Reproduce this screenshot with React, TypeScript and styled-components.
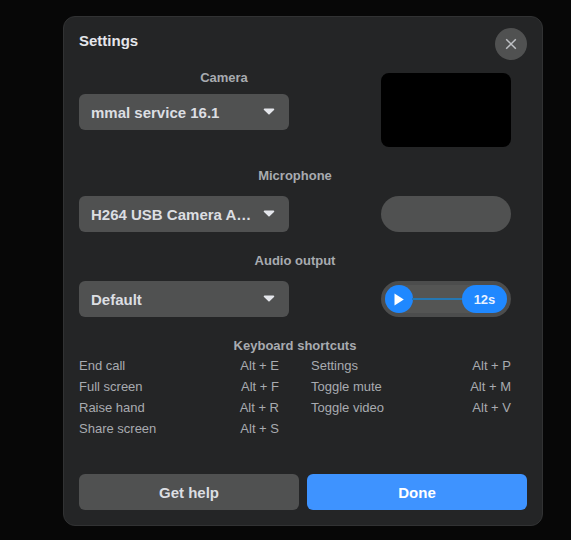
import React from "react";
import styled, { createGlobalStyle } from "styled-components";

const Global = createGlobalStyle`
  html, body { margin: 0; padding: 0; background: #070707; }
  body { width: 571px; height: 540px; overflow: hidden; font-family: "Liberation Sans", Arial, sans-serif; }
`;

const Page = styled.div`
  width: 571px;
  height: 540px;
  padding: 16px 28px 14px 63px;
  box-sizing: border-box;
`;

const Dialog = styled.div`
  position: relative;
  width: 480px;
  height: 510px;
  box-sizing: border-box;
  padding: 15px;
  background: #242526;
  border: 1px solid #313233;
  border-radius: 12px;
  display: flex;
  flex-direction: column;
`;

const Title = styled.h1`
  margin: 0;
  font-size: 15px;
  line-height: 18px;
  font-weight: 700;
  color: #e4e6eb;
`;

const CloseButton = styled.button`
  position: absolute;
  top: 11px;
  right: 15px;
  width: 32px;
  height: 32px;
  padding: 0;
  border: 0;
  border-radius: 50%;
  background: #505151;
  display: flex;
  align-items: center;
  justify-content: center;
`;

const Row = styled.div<{ $top: number }>`
  display: grid;
  grid-template-columns: 290px 130px;
  column-gap: 12px;
  margin-top: ${(p) => p.$top}px;
`;

const Column = styled.div`
  display: flex;
  flex-direction: column;
`;

const FieldLabel = styled.div<{ $gap: number }>`
  font-size: 13px;
  line-height: 15px;
  font-weight: 700;
  color: #a8abb0;
  text-align: center;
  margin-bottom: ${(p) => p.$gap}px;
`;

const WideLabel = styled(FieldLabel)<{ $top: number }>`
  width: 432px;
  margin-top: ${(p) => p.$top}px;
`;

const Select = styled.div`
  width: 210px;
  height: 36px;
  box-sizing: border-box;
  padding: 0 14px 0 12px;
  border-radius: 6px;
  background: #505151;
  display: flex;
  align-items: center;
  gap: 10px;
`;

const SelectText = styled.span`
  flex: 1;
  min-width: 0;
  overflow: hidden;
  white-space: nowrap;
  text-overflow: ellipsis;
  font-size: 15px;
  font-weight: 700;
  color: #dcdee2;
`;

const CaretIcon = styled.svg`
  flex: none;
  width: 12px;
  height: 7px;
  margin-top: -2px;
`;

const Preview = styled.div`
  width: 130px;
  height: 74px;
  margin-top: 3px;
  border-radius: 8px;
  background: #000;
`;

const MicMeter = styled.div`
  width: 130px;
  height: 36px;
  border-radius: 18px;
  background: #505151;
`;

const Player = styled.div`
  width: 130px;
  height: 36px;
  box-sizing: border-box;
  border: 4px solid #4c4d4d;
  border-radius: 18px;
  background: #545554;
  display: flex;
  align-items: center;
`;

const PlayCircle = styled.div`
  flex: none;
  width: 28px;
  height: 28px;
  border-radius: 50%;
  background: #1f88ff;
  display: flex;
  align-items: center;
  justify-content: center;
`;

const Track = styled.div`
  flex: 1;
  height: 2px;
  background: #2477b3;
  margin: 0 -1px;
`;

const Time = styled.div`
  flex: none;
  width: 45px;
  height: 28px;
  border-radius: 14px;
  background: #1f88ff;
  color: #e8f2ff;
  font-size: 13px;
  font-weight: 700;
  display: flex;
  align-items: center;
  justify-content: center;
`;

const Shortcuts = styled.div`
  display: grid;
  grid-template-columns: 200px 200px;
  column-gap: 32px;
  width: 432px;
`;

const Shortcut = styled.div`
  display: flex;
  justify-content: space-between;
  height: 21px;
  font-size: 13px;
  line-height: 15px;
  color: #a8abb0;
`;

const Footer = styled.div`
  display: flex;
  gap: 8px;
  margin-top: auto;
`;

const Action = styled.button<{ $primary?: boolean }>`
  flex: 1;
  height: 36px;
  padding: 0;
  border: 0;
  border-radius: 6px;
  background: ${(p) => (p.$primary ? "#3e93ff" : "#505151")};
  color: ${(p) => (p.$primary ? "#ffffff" : "#dcdee2")};
  font-family: inherit;
  font-size: 15px;
  font-weight: 700;
`;

const left = [
  ["End call", "Alt + E"],
  ["Full screen", "Alt + F"],
  ["Raise hand", "Alt + R"],
  ["Share screen", "Alt + S"],
];
const right = [
  ["Settings", "Alt + P"],
  ["Toggle mute", "Alt + M"],
  ["Toggle video", "Alt + V"],
];

const pairs = left.flatMap((l, i) => [l, right[i] ?? null]);

const Caret = () => (
  <CaretIcon viewBox="0 0 12 7">
    <path d="M1.6 0.5H10.4C11.2 0.5 11.6 1.3 11 1.9L6.6 6.2C6.2 6.6 5.8 6.6 5.4 6.2L1 1.9C0.4 1.3 0.8 0.5 1.6 0.5Z" fill="#e4e6eb" />
  </CaretIcon>
);

export default function App() {
  return (
    <Page>
      <Global />
      <Dialog>
        <Title>Settings</Title>
        <CloseButton aria-label="Close">
          <svg width="12" height="12" viewBox="0 0 12 12">
            <path d="M1.2 1.2l9.6 9.6M10.8 1.2L1.2 10.8" stroke="#bfc1c5" strokeWidth="1.5" fill="none" />
          </svg>
        </CloseButton>

        <Row $top={20}>
          <Column>
            <FieldLabel $gap={9}>Camera</FieldLabel>
            <Select>
              <SelectText>mmal service 16.1</SelectText>
              <Caret />
            </Select>
          </Column>
          <Preview />
        </Row>

        <WideLabel $top={21} $gap={13}>Microphone</WideLabel>
        <Row $top={0}>
          <Select>
            <SelectText>H264 USB Camera Audio</SelectText>
            <Caret />
          </Select>
          <MicMeter />
        </Row>

        <WideLabel $top={21} $gap={13}>Audio output</WideLabel>
        <Row $top={0}>
          <Select>
            <SelectText>Default</SelectText>
            <Caret />
          </Select>
          <Player>
            <PlayCircle>
              <svg width="10" height="13" viewBox="0 0 10 13">
                <path d="M0.5 0.5L9.8 6.5L0.5 12.5Z" fill="#fff" />
              </svg>
            </PlayCircle>
            <Track />
            <Time>12s</Time>
          </Player>
        </Row>

        <WideLabel $top={21} $gap={5}>Keyboard shortcuts</WideLabel>
        <Shortcuts>
          {pairs.map((p, i) =>
            p ? (
              <Shortcut key={i}>
                <span>{p[0]}</span>
                <span>{p[1]}</span>
              </Shortcut>
            ) : (
              <span key={i} />
            )
          )}
        </Shortcuts>

        <Footer>
          <Action>Get help</Action>
          <Action $primary>Done</Action>
        </Footer>
      </Dialog>
    </Page>
  );
}
